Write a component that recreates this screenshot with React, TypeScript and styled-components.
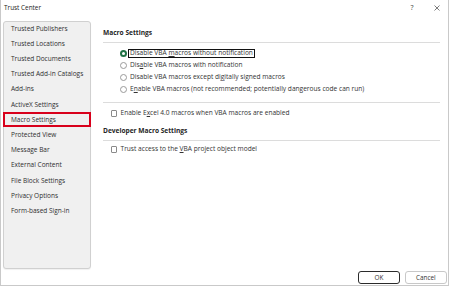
import React from "react";
import styled, { createGlobalStyle } from "styled-components";

const GlobalStyle = createGlobalStyle`
  html, body {
    margin: 0;
    padding: 0;
    background: #fff;
  }
  body {
    font-family: "Open Sans", "Noto Sans", sans-serif;
    color: #333;
  }
`;

const Window = styled.div`
  box-sizing: border-box;
  width: 449px;
  height: 286px;
  border: 1px solid #c9c9c9;
  border-top: none;
  display: flex;
  flex-direction: column;
  background: #fff;
`;

const TitleBar = styled.div`
  height: 21px;
  display: flex;
  align-items: flex-start;
  padding: 0 6px 0 3px;
`;

const Title = styled.div`
  flex: 1;
  font-size: 6.4px;
  line-height: 15px;
  color: #222;
`;

const TitleButton = styled.div`
  width: 10px;
  height: 15px;
  display: flex;
  align-items: center;
  justify-content: center;
  font-size: 7px;
  color: #444;
  & + & {
    margin-left: 15px;
  }
`;

const Main = styled.div`
  height: 248px;
  display: flex;
`;

const Sidebar = styled.nav`
  box-sizing: border-box;
  width: 87.5px;
  margin-left: 2px;
  height: 100%;
  background: #f0f0f0;
  border: 1px solid #d0d0d0;
  border-radius: 3px;
  box-shadow: 0 1px 1px rgba(0, 0, 0, 0.06);
`;

const NavList = styled.ul`
  list-style: none;
  margin: -1.3px 0 0;
  padding: 0;
`;

const NavItem = styled.li<{ $marked?: boolean }>`
  position: relative;
  height: 15.2px;
  line-height: 15.2px;
  padding-left: 7px;
  font-size: 6.5px;
  color: #2e2e2e;
  white-space: nowrap;
  &::after {
    content: "";
    display: ${(p) => (p.$marked ? "block" : "none")};
    position: absolute;
    left: -1px;
    right: -1px;
    top: 0;
    bottom: 0;
    border: 2px solid #d8001b;
  }
`;

const Content = styled.section`
  flex: 1;
  padding: 0 8px 0 12.5px;
`;

const Heading = styled.div<{ $top: number; $bottom: number }>`
  padding-top: ${(p) => p.$top}px;
  padding-bottom: ${(p) => p.$bottom}px;
  border-bottom: 1px solid #dcdcdc;
  font-size: 6.6px;
  line-height: 12px;
  font-weight: 700;
  color: #262626;
`;

const Group = styled.div<{ $top: number; $bottom?: number; $rule?: boolean }>`
  padding-top: ${(p) => p.$top}px;
  padding-bottom: ${(p) => p.$bottom ?? 0}px;
  border-bottom: ${(p) => (p.$rule ? "1px solid #dcdcdc" : "none")};
`;

const Option = styled.label<{ $indent: number }>`
  display: flex;
  align-items: center;
  height: 12px;
  padding-left: ${(p) => p.$indent}px;
  font-size: 6.6px;
  color: #333;
  white-space: nowrap;
`;

const Radio = styled.span<{ $checked?: boolean }>`
  box-sizing: border-box;
  width: 7px;
  height: 7px;
  border-radius: 50%;
  background: #fff;
  border: ${(p) => (p.$checked ? "2px solid #217346" : "1px solid #9a9a9a")};
  margin-right: 1.5px;
  flex-shrink: 0;
`;

const Check = styled.span`
  box-sizing: border-box;
  width: 6.5px;
  height: 6.5px;
  border: 1px solid #8a8a8a;
  border-radius: 1px;
  background: #fff;
  margin-right: 1.5px;
  flex-shrink: 0;
`;

const LabelText = styled.span<{ $focused?: boolean }>`
  display: inline-block;
  line-height: 6.5px;
  padding: 0 1px;
  border: 1px solid ${(p) => (p.$focused ? "#111" : "transparent")};
`;

const Key = styled.u`
  text-decoration-thickness: 0.5px;
  text-underline-offset: 0.8px;
`;

const Footer = styled.div`
  flex: 1;
  display: flex;
  justify-content: flex-end;
  align-items: flex-start;
  gap: 5px;
  padding: 2px 1.3px 0 0;
`;

const Button = styled.button<{ $primary?: boolean }>`
  box-sizing: border-box;
  height: 13px;
  width: ${(p) => (p.$primary ? 42 : 41.7)}px;
  padding: 0;
  background: #fff;
  border: ${(p) => (p.$primary ? "1.3px solid #2b2b2b" : "1px solid #c8c8c8")};
  border-radius: 3px;
  font-family: inherit;
  font-size: 6.4px;
  color: #333;
`;

const navItems = [
  "Trusted Publishers",
  "Trusted Locations",
  "Trusted Documents",
  "Trusted Add-in Catalogs",
  "Add-ins",
  "ActiveX Settings",
  "Macro Settings",
  "Protected View",
  "Message Bar",
  "External Content",
  "File Block Settings",
  "Privacy Options",
  "Form-based Sign-in",
];

const CloseIcon = () => (
  <svg width="6" height="6" viewBox="0 0 6 6">
    <path d="M0.5 0.5 L5.5 5.5 M5.5 0.5 L0.5 5.5" stroke="#444" strokeWidth="0.7" fill="none" />
  </svg>
);

export default function App() {
  return (
    <>
      <GlobalStyle />
      <Window>
        <TitleBar>
          <Title>Trust Center</Title>
          <TitleButton>?</TitleButton>
          <TitleButton>
            <CloseIcon />
          </TitleButton>
        </TitleBar>
        <Main>
          <Sidebar>
            <NavList>
              {navItems.map((item) => (
                <NavItem key={item} $marked={item === "Macro Settings"}>
                  {item}
                </NavItem>
              ))}
            </NavList>
          </Sidebar>
          <Content>
            <Heading $top={5.5} $bottom={3.2}>
              Macro Settings
            </Heading>
            <Group $top={4.6} $bottom={6.7} $rule>
              <Option $indent={16.5}>
                <Radio $checked />
                <LabelText $focused>
                  Disable VBA <Key>m</Key>acros without notification
                </LabelText>
              </Option>
              <Option $indent={16.5}>
                <Radio />
                <LabelText>
                  Dis<Key>a</Key>ble VBA macros with notification
                </LabelText>
              </Option>
              <Option $indent={16.5}>
                <Radio />
                <LabelText>
                  Disable VBA macros except di<Key>g</Key>itally signed macros
                </LabelText>
              </Option>
              <Option $indent={16.5}>
                <Radio />
                <LabelText>
                  E<Key>n</Key>able VBA macros (not recommended; potentially dangerous code can run)
                </LabelText>
              </Option>
            </Group>
            <Group $top={4.5}>
              <Option $indent={7.5}>
                <Check />
                <LabelText>
                  Enable E<Key>x</Key>cel 4.0 macros when VBA macros are enabled
                </LabelText>
              </Option>
            </Group>
            <Heading $top={5.5} $bottom={3}>
              Developer Macro Settings
            </Heading>
            <Group $top={2.5}>
              <Option $indent={7.5}>
                <Check />
                <LabelText>
                  Trust access to the <Key>V</Key>BA project object model
                </LabelText>
              </Option>
            </Group>
          </Content>
        </Main>
        <Footer>
          <Button $primary>OK</Button>
          <Button>Cancel</Button>
        </Footer>
      </Window>
    </>
  );
}
